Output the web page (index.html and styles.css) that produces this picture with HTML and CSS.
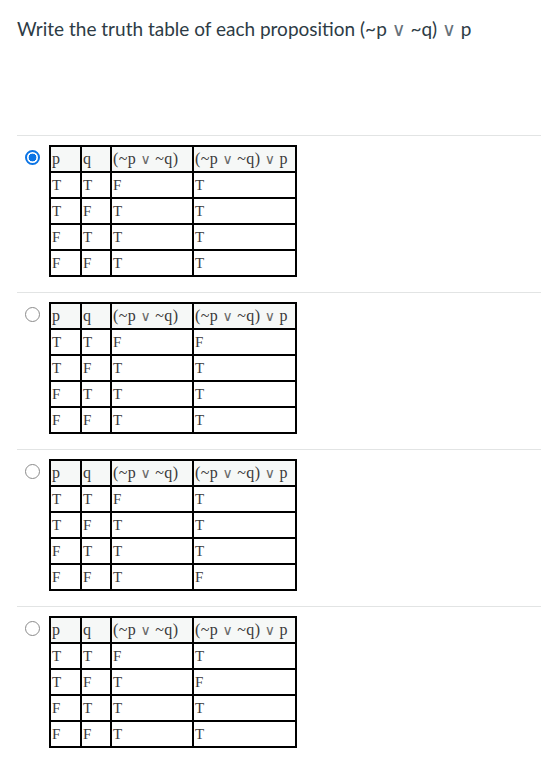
FILE: index.html
```html
<!DOCTYPE html>
<html>
<head>
<meta charset="utf-8">
<link rel="stylesheet" href="styles.css">
</head>
<body>
<div class="question">
  <h1 class="title">Write the truth table of each proposition (~p <span class="or">∨</span> ~q) <span class="or">∨</span> p</h1>
  <div class="answers">
    <div class="answer">
      <span class="radio checked"></span>
      <table class="tt">
        <tr class="head"><td class="c1">p</td><td class="c2">q</td><td class="c3">(~p <span class="op">∨</span> ~q)</td><td class="c4">(~p <span class="op">∨</span> ~q) <span class="op">∨</span> p</td></tr>
        <tr><td>T</td><td>T</td><td>F</td><td>T</td></tr>
        <tr><td>T</td><td>F</td><td>T</td><td>T</td></tr>
        <tr><td>F</td><td>T</td><td>T</td><td>T</td></tr>
        <tr><td>F</td><td>F</td><td>T</td><td>T</td></tr>
      </table>
    </div>
    <div class="answer">
      <span class="radio"></span>
      <table class="tt">
        <tr class="head"><td class="c1">p</td><td class="c2">q</td><td class="c3">(~p <span class="op">∨</span> ~q)</td><td class="c4">(~p <span class="op">∨</span> ~q) <span class="op">∨</span> p</td></tr>
        <tr><td>T</td><td>T</td><td>F</td><td>F</td></tr>
        <tr><td>T</td><td>F</td><td>T</td><td>T</td></tr>
        <tr><td>F</td><td>T</td><td>T</td><td>T</td></tr>
        <tr><td>F</td><td>F</td><td>T</td><td>T</td></tr>
      </table>
    </div>
    <div class="answer">
      <span class="radio"></span>
      <table class="tt">
        <tr class="head"><td class="c1">p</td><td class="c2">q</td><td class="c3">(~p <span class="op">∨</span> ~q)</td><td class="c4">(~p <span class="op">∨</span> ~q) <span class="op">∨</span> p</td></tr>
        <tr><td>T</td><td>T</td><td>F</td><td>T</td></tr>
        <tr><td>T</td><td>F</td><td>T</td><td>T</td></tr>
        <tr><td>F</td><td>T</td><td>T</td><td>T</td></tr>
        <tr><td>F</td><td>F</td><td>T</td><td>F</td></tr>
      </table>
    </div>
    <div class="answer">
      <span class="radio"></span>
      <table class="tt">
        <tr class="head"><td class="c1">p</td><td class="c2">q</td><td class="c3">(~p <span class="op">∨</span> ~q)</td><td class="c4">(~p <span class="op">∨</span> ~q) <span class="op">∨</span> p</td></tr>
        <tr><td>T</td><td>T</td><td>F</td><td>T</td></tr>
        <tr><td>T</td><td>F</td><td>T</td><td>F</td></tr>
        <tr><td>F</td><td>T</td><td>T</td><td>T</td></tr>
        <tr><td>F</td><td>F</td><td>T</td><td>T</td></tr>
      </table>
    </div>
  </div>
</div>
</body>
</html>
```

FILE: styles.css
```css
html, body {
  margin: 0;
  padding: 0;
  background: #ffffff;
}

.question {
  padding-left: 17px;
}

.title {
  margin: 0;
  padding-top: 15px;
  font-family: Lato, "Liberation Sans", sans-serif;
  font-weight: 400;
  font-size: 19px;
  line-height: 28px;
  color: #2d3b45;
}

.title .or {
  font-family: "DejaVu Sans", sans-serif;
  font-weight: 400;
  font-size: 19px;
  line-height: 1;
  color: #66717a;
}

.answers {
  margin-top: 92px;
}

.answer {
  display: flex;
  align-items: flex-start;
  border-top: 1px solid #e2e4e4;
  padding: 9px 0 15px 0;
}

.radio {
  box-sizing: border-box;
  width: 15px;
  height: 15px;
  margin: 5px 9px 0 8px;
  border-radius: 50%;
  border: 1px solid #8b8b8b;
  background: #fff;
  flex: none;
}

.radio.checked {
  border: 2px solid #0b74e5;
  background: radial-gradient(circle, #0b74e5 0 3.6px, #fff 4.2px);
}

.tt {
  border-collapse: collapse;
  border: 2px solid #000;
  font-family: "Liberation Serif", "DejaVu Serif", serif;
  font-size: 15px;
  color: #3a3a3a;
}

.tt td {
  border: 2px solid #000;
  padding: 0 1px;
  height: 24px;
  line-height: 18px;
  vertical-align: middle;
  white-space: nowrap;
}

.tt .head td {
  background: #f6f8f7;
  font-size: 16px;
  letter-spacing: 0.4px;
}

.tt .op {
  font-family: "DejaVu Sans", sans-serif;
  font-weight: 400;
  font-size: 14px;
  letter-spacing: 0;
  color: #6a6a6a;
}

.c1 { width: 27px; }
.c2 { width: 26px; }
.c3 { width: 78px; }
.c4 { width: 99px; }
```
